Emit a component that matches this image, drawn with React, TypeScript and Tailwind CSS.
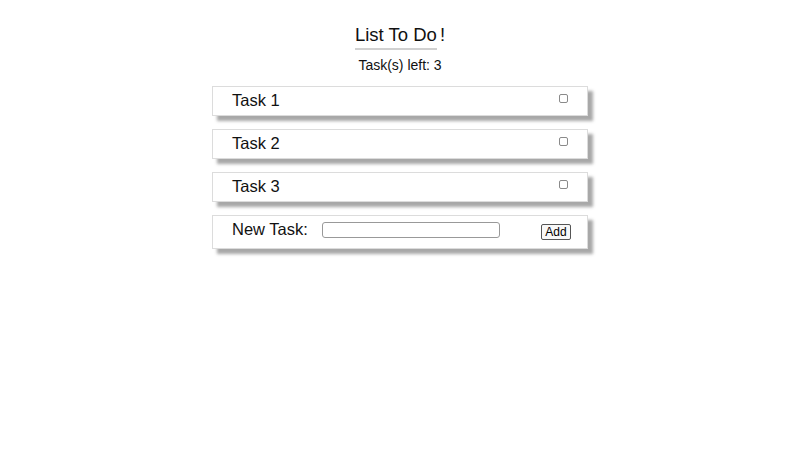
import React from "react";

const tasks = ["Task 1", "Task 2", "Task 3"];

function Card({ children, className = "" }: { children: React.ReactNode; className?: string }) {
  return (
    <div
      className={
        "w-[376px] bg-white border border-[#dcdcdc] shadow-[5px_5px_3px_#a8a8a8] flex " +
        className
      }
    >
      {children}
    </div>
  );
}

export default function App() {
  return (
    <div
      className="w-[800px] h-[450px] bg-white text-[#111] flex flex-col items-center pt-[24px]"
      style={{ fontFamily: '"Liberation Sans", Arial, sans-serif' }}
    >
      <h1 className="flex items-start text-[18.5px] leading-[22px] font-normal">
        <span className="inline-block border-b-2 border-[#d0d0d0] pb-[2px]">List To Do</span>
        <span className="ml-[3px]">!</span>
      </h1>
      <div className="mt-[5px] text-[14px] leading-[20px]">Task(s) left: 3</div>
      <div className="mt-[11px] flex flex-col gap-[13px]">
        {tasks.map((t) => (
          <Card key={t} className="h-[30px] items-start">
            <span className="ml-[19px] text-[16.5px] leading-[26px]">{t}</span>
            <span className="ml-auto mr-[19px] mt-[7px] w-[9px] h-[9px] border border-[#8a8a8a] rounded-[2px] bg-white" />
          </Card>
        ))}
        <Card className="h-[34px] items-start">
          <span className="ml-[19px] text-[16.5px] leading-[26px]">New Task:</span>
          <input
            type="text"
            className="ml-[14px] mt-[6px] w-[178px] h-[16px] border border-[#999] rounded-[3px] bg-white outline-none"
          />
          <button className="ml-auto mr-[16px] mt-[8px] w-[30px] h-[16px] border border-[#555] rounded-[2px] bg-[#f8f8f8] text-[12px] leading-[14px] text-black">
            Add
          </button>
        </Card>
      </div>
    </div>
  );
}
